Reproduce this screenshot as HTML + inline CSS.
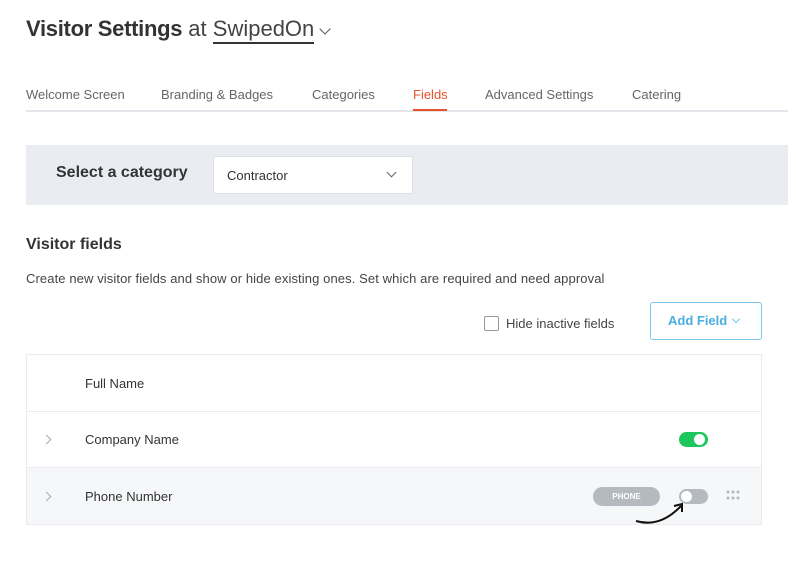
<!DOCTYPE html>
<html><head><style>
body{margin:0;width:796px;height:576px;background:#fff;font-family:"Liberation Sans",sans-serif;color:#333;position:relative;overflow:hidden}
.a{position:absolute}
.tab{position:absolute;top:87px;font-size:13px;color:#666}
.row{position:absolute;left:26px;width:734px;height:56px;border:1px solid #e8ebef;border-top:none}
.row span{position:absolute;left:58px;top:21px;font-size:13px;color:#333}
.chev{position:absolute;left:16px;top:25px;width:6px;height:6px;border-right:1.3px solid #aaa;border-top:1.3px solid #aaa;transform:rotate(45deg)}
</style></head><body>
<div class="a" style="left:26px;top:16px;font-size:22px;color:#333"><b style="letter-spacing:-0.3px">Visitor Settings</b> <span style="font-weight:normal;color:#444">at</span> <span style="border-bottom:2px solid #333;padding-bottom:1px;color:#444">SwipedOn</span></div>
<div class="a" style="left:321px;top:25px;width:7px;height:7px;border-right:1.5px solid #555;border-bottom:1.5px solid #555;transform:rotate(45deg)"></div>
<div class="tab" style="left:26px">Welcome Screen</div>
<div class="tab" style="left:161px">Branding &amp; Badges</div>
<div class="tab" style="left:312px">Categories</div>
<div class="tab" style="left:413px;color:#e8522a">Fields</div>
<div class="tab" style="left:485px">Advanced Settings</div>
<div class="tab" style="left:632px">Catering</div>
<div class="a" style="left:26px;top:110px;width:762px;height:2px;background:#e3e6ea"></div>
<div class="a" style="left:413px;top:109px;width:34px;height:2px;background:#e8522a"></div>
<div class="a" style="left:26px;top:145px;width:762px;height:60px;background:#e9edf2"></div>
<div class="a" style="left:56px;top:164px;font-size:16px;font-weight:bold;color:#333">Select a category</div>
<div class="a" style="left:213px;top:156px;width:198px;height:36px;background:#fff;border:1px solid #dde1e6;border-radius:3px"></div>
<div class="a" style="left:227px;top:168px;font-size:13px;color:#333">Contractor</div>
<div class="a" style="left:388px;top:169px;width:6px;height:6px;border-right:1.3px solid #666;border-bottom:1.3px solid #666;transform:rotate(45deg)"></div>
<div class="a" style="left:26px;top:236px;font-size:16px;font-weight:bold;color:#333">Visitor fields</div>
<div class="a" style="left:26px;top:271px;font-size:13px;color:#444;letter-spacing:0.1px">Create new visitor fields and show or hide existing ones. Set which are required and need approval</div>
<div class="a" style="left:484px;top:316px;width:13px;height:13px;border:1px solid #999;border-radius:2px"></div>
<div class="a" style="left:506px;top:316px;font-size:13px;color:#444">Hide inactive fields</div>
<div class="a" style="left:650px;top:302px;width:110px;height:36px;border:1px solid #7cc8e8;border-radius:3px"></div>
<div class="a" style="left:668px;top:313px;font-size:13px;font-weight:bold;color:#4aaee0">Add Field</div>
<div class="a" style="left:733px;top:316px;width:5px;height:5px;border-right:1.2px solid #7cc8e8;border-bottom:1.2px solid #7cc8e8;transform:rotate(45deg)"></div>
<div class="row" style="top:354px;border-top:1px solid #e8ebef"><span>Full Name</span></div>
<div class="row" style="top:411px"><div class="chev"></div><span>Company Name</span>
<div class="a" style="left:652px;top:21px;width:29px;height:15px;border-radius:8px;background:#1dc75c"></div>
<div class="a" style="left:667px;top:23px;width:11px;height:11px;border-radius:50%;background:#fff"></div></div>
<div class="row" style="top:468px;background:#f6f7f9"><div class="chev"></div><span>Phone Number</span>
<div class="a" style="left:566px;top:19px;width:67px;height:19px;border-radius:10px;background:#b5b9c0;color:#fff;font-size:8px;font-weight:bold;text-align:center;line-height:19px">PHONE</div>
<div class="a" style="left:652px;top:21px;width:29px;height:15px;border-radius:8px;background:#b5b9c0"></div>
<div class="a" style="left:654px;top:23px;width:11px;height:11px;border-radius:50%;background:#fff"></div>
<svg class="a" style="left:698px;top:22px" width="18" height="10"><g fill="#b5b9c0"><circle cx="3" cy="2" r="1.5"/><circle cx="8" cy="2" r="1.5"/><circle cx="13" cy="2" r="1.5"/><circle cx="3" cy="8" r="1.5"/><circle cx="8" cy="8" r="1.5"/><circle cx="13" cy="8" r="1.5"/></g></svg></div>
<svg class="a" style="left:630px;top:498px" width="60" height="30"><path d="M6 23 Q30 30 51 8" fill="none" stroke="#111" stroke-width="2"/><path d="M44 8 L52 6 L52 14" fill="none" stroke="#111" stroke-width="2"/></svg>
</body></html>
